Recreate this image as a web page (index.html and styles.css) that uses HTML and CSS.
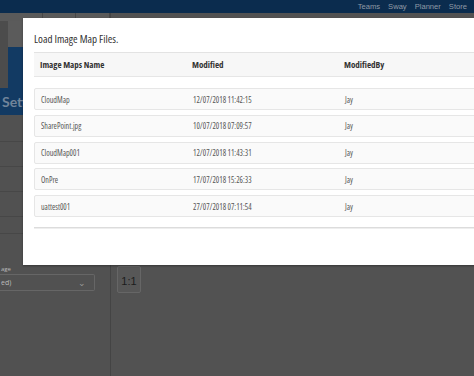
FILE: index.html
```html
<!DOCTYPE html>
<html>
<head>
<meta charset="utf-8">
<link rel="stylesheet" href="styles.css">
</head>
<body>
<div class="page">
  <header class="topbar">
    <nav class="apps">
      <span>Teams</span><span>Sway</span><span>Planner</span><span>Store</span>
    </nav>
  </header>
  <div class="main">
    <aside class="sidebar">
      <div class="tabs"><span></span><span></span><span></span></div>
      <div class="side-top">
        <div class="side-gray"></div>
        <div class="side-blue"></div>
      </div>
      <div class="side-head">Sett</div>
      <ul class="side-list">
        <li></li><li></li><li></li><li></li><li></li>
      </ul>
      <div class="side-field">
        <div class="field-label">age</div>
        <div class="select"><span>ed)</span><span class="chev">&#8964;</span></div>
      </div>
    </aside>
    <section class="canvas">
      <div class="zoombtn">1:1</div>
    </section>
  </div>

  <div class="modal">
    <div class="modal-title">Load Image Map Files.</div>
    <div class="modal-body">
      <div class="thead">
        <span class="c1">Image Maps Name</span><span class="c2">Modified</span><span class="c3">ModifiedBy</span>
      </div>
      <div class="rows">
        <div class="row"><span class="c1">CloudMap</span><span class="c2">12/07/2018 11:42:15</span><span class="c3">Jay</span></div>
        <div class="row"><span class="c1">SharePoint.jpg</span><span class="c2">10/07/2018 07:09:57</span><span class="c3">Jay</span></div>
        <div class="row"><span class="c1">CloudMap001</span><span class="c2">12/07/2018 11:43:31</span><span class="c3">Jay</span></div>
        <div class="row"><span class="c1">OnPre</span><span class="c2">17/07/2018 15:26:33</span><span class="c3">Jay</span></div>
        <div class="row"><span class="c1">uattest001</span><span class="c2">27/07/2018 07:11:54</span><span class="c3">Jay</span></div>
      </div>
      <div class="modal-foot"></div>
    </div>
  </div>
</div>
</body>
</html>
```

FILE: styles.css
```css
* { box-sizing: border-box; margin: 0; padding: 0; }
html, body { width: 474px; height: 376px; overflow: hidden; }
body { background: #525252; font-family: "Open Sans", "Lato", sans-serif; }
.page { position: relative; width: 474px; height: 376px; overflow: hidden; }

.topbar { height: 13px; background: #0b2c4e; display: flex; justify-content: flex-end; align-items: center; }
.apps { display: flex; gap: 8px; padding-right: 7px; font-family: "Liberation Sans", Arial, sans-serif; font-size: 7.6px; color: #8f9aa6; }

.main { display: flex; height: 363px; }
.sidebar { width: 111px; border-right: 1px solid #444; background: #515151; display: flex; flex-direction: column; }
.tabs { display: flex; height: 8px; }
.tabs span { width: 34px; border-right: 1px solid #474747; background: #5a5a5a; }
.tabs span:first-child { width: 43px; }
.side-top { display: flex; height: 67px; }
.side-gray { width: 8px; background: #4c4c4c; }
.side-blue { flex: 1; background: linear-gradient(#5b5b5b 0 26px, #123a63 26px); }
.side-head { height: 27px; background: #123a63; color: #71849a; font-family: "Lato", sans-serif; font-size: 14px; font-weight: 700; line-height: 27px; padding-left: 2px; }
.side-list { list-style: none; }
.side-list li { height: 25px; border-bottom: 1px solid #474747; }
.side-list li:first-child { height: 27px; }
.side-list li:last-child { height: 17px; }
.side-field { margin-top: 31px; }
.field-label { font-size: 6px; color: #bbb; height: 9px; padding-left: 1px; }
.select { width: 95px; height: 17px; border: 1px solid #666; border-left: none; border-radius: 0 2px 2px 0; display: flex; justify-content: space-between; align-items: center; padding: 0 8px 0 1px; font-size: 7px; color: #bbb; }
.select .chev { font-size: 9px; color: #999; line-height: 6px; }

.canvas { flex: 1; padding: 253px 0 0 6px; }
.zoombtn { width: 24px; height: 27px; border: 1px solid #666; background: #575757; border-radius: 2px; font-family: "Liberation Sans", Arial, sans-serif; font-size: 11px; color: #1c1c1c; display: flex; align-items: center; justify-content: center; padding-top: 3px; }

.modal { position: absolute; left: 23px; top: 18px; width: 490px; height: 247px; background: #fff; box-shadow: 0 1px 2px rgba(0,0,0,0.35); font-stretch: 80%; }
.modal-title { height: 34px; padding: 13px 0 0 11px; font-size: 11px; color: #333; }
.modal-body { padding-left: 11px; }
.thead { height: 25px; background: #f7f7f7; border-top: 1px solid #e3e3e3; border-bottom: 1px solid #e6e6e6; display: flex; align-items: center; font-weight: 700; font-size: 9px; color: #333; }
.c1, .c2 { width: 152px; padding-left: 6px; flex: none; }
.c3 { padding-left: 6px; }
.rows { margin-top: 11px; display: flex; flex-direction: column; gap: 4.75px; }
.row { height: 22px; border: 1px solid #e6e6e6; border-radius: 2px; background: #fafafa; display: flex; align-items: center; font-size: 8px; color: #555; }
.modal-foot { margin-top: 10px; border-top: 1px solid #dcdcdc; box-shadow: 0 1px 0 #eee; }
```
